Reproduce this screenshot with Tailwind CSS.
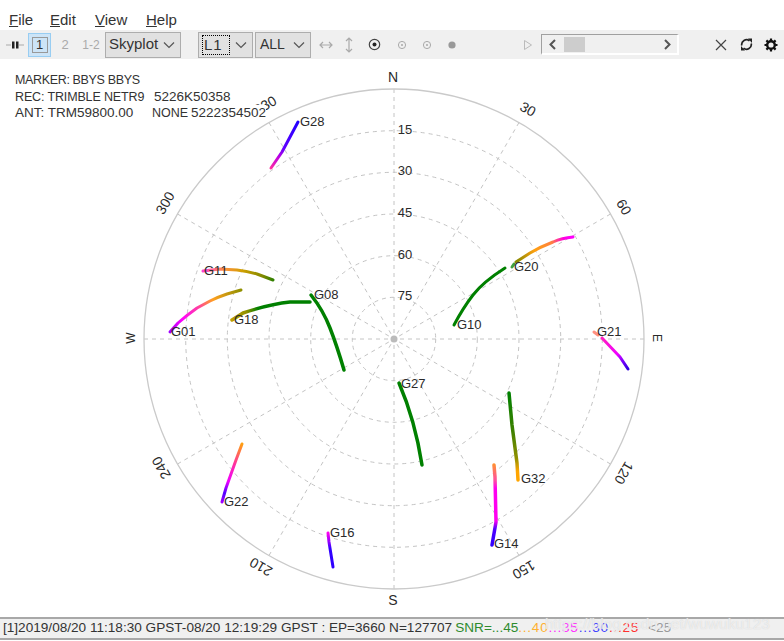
<!DOCTYPE html>
<html lang="en">
  <head>
    <meta charset="UTF-8" />
    <title>RTKPLOT</title>
    <script src="https://cdn.jsdelivr.net/npm/@tailwindcss/browser@4"></script>
  </head>
  <body class="bg-white w-[784px] h-[641px] overflow-hidden flex flex-col font-['Liberation_Sans',sans-serif] text-[#222]">
    <!-- Menu -->
    <div class="h-[30px] flex items-center pl-[9px] pt-[10px] text-[15px] text-[#333]">
      <span class="w-[41px]"><u>F</u>ile</span>
      <span class="w-[45px]"><u>E</u>dit</span>
      <span class="w-[51px]"><u>V</u>iew</span>
      <span><u>H</u>elp</span>
    </div>

    <!-- Toolbar -->
    <div class="h-[29px] bg-[#f0f0f0] flex items-center text-[14px]">
      <svg class="ml-[6px] w-[18px] h-[12px]" viewBox="0 0 18 12">
        <path d="M0 6h5M13 6h5" stroke="#aaa" stroke-width="1" />
        <path d="M6 2.500h2.500v7H6zM10 2.500h2.500v7H10z" fill="#222" />
      </svg>
      <div class="ml-[4px] w-[23px] h-[24px] bg-[#cce4f7] border border-[#98cdf2] flex items-center justify-center">
        <div class="w-[16px] h-[16px] border border-[#999] flex items-center justify-center text-[13px] text-[#333]">1</div>
      </div>
      <span class="ml-[8px] w-[12px] text-center text-[13px] text-[#aaa]">2</span>
      <span class="ml-[10px] w-[20px] text-center text-[12px] text-[#aaa] whitespace-nowrap">1-2</span>
      <div class="ml-[4px] w-[76px] h-[26px] bg-[#e1e1e1] border border-[#adadad] flex items-center justify-between pl-[3px] pr-[5px] text-[15px] text-[#333]">
        Skyplot
        <svg class="w-[12px] h-[8px]" viewBox="0 0 12 8"><path d="M1 1.500l5 5 5-5" fill="none" stroke="#555" stroke-width="1.200" /></svg>
      </div>
      <div class="ml-[17px] w-[55px] h-[26px] bg-[#e1e1e1] border border-[#adadad] flex items-center justify-between pl-[3px] pr-[5px] text-[#333]">
        <span class="w-[28px] h-[20px] border border-dotted border-black flex items-center text-[15px] leading-none pl-[1px] tracking-[1px]">L1</span>
        <svg class="w-[12px] h-[8px]" viewBox="0 0 12 8"><path d="M1 1.500l5 5 5-5" fill="none" stroke="#555" stroke-width="1.200" /></svg>
      </div>
      <div class="ml-[2px] w-[56px] h-[26px] bg-[#e1e1e1] border border-[#adadad] flex items-center justify-between pl-[4px] pr-[5px] text-[14px] text-[#333]">
        ALL
        <svg class="w-[12px] h-[8px]" viewBox="0 0 12 8"><path d="M1 1.500l5 5 5-5" fill="none" stroke="#555" stroke-width="1.200" /></svg>
      </div>
      <svg class="ml-[8px] w-[14px] h-[10px]" viewBox="0 0 14 10">
        <path d="M1 5h12M4 2L1 5l3 3M10 2l3 3-3 3" fill="none" stroke="#aaa" stroke-width="1.200" />
      </svg>
      <svg class="ml-[11px] w-[10px] h-[16px]" viewBox="0 0 10 16">
        <path d="M5 1v14M2 4l3-3 3 3M2 12l3 3 3-3" fill="none" stroke="#aaa" stroke-width="1.200" />
      </svg>
      <svg class="ml-[14px] w-[13px] h-[13px]" viewBox="0 0 13 13">
        <circle cx="6.500" cy="6.500" r="5.200" fill="none" stroke="#444" stroke-width="1.200" />
        <circle cx="6.500" cy="6.500" r="2" fill="#222" />
      </svg>
      <svg class="ml-[16px] w-[10px] h-[10px]" viewBox="0 0 10 10">
        <circle cx="5" cy="5" r="3.600" fill="none" stroke="#aaa" />
        <circle cx="5" cy="5" r="1" fill="#aaa" />
      </svg>
      <svg class="ml-[15px] w-[10px] h-[10px]" viewBox="0 0 10 10">
        <circle cx="5" cy="5" r="3.600" fill="none" stroke="#aaa" />
        <circle cx="5" cy="5" r="1" fill="#aaa" />
      </svg>
      <svg class="ml-[15px] w-[10px] h-[10px]" viewBox="0 0 10 10">
        <circle cx="5" cy="5" r="3.600" fill="#999" />
      </svg>
      <svg class="ml-[66px] w-[10px] h-[12px]" viewBox="0 0 10 12">
        <path d="M1.500 1.500l7 4.500-7 4.500z" fill="none" stroke="#bbb" />
      </svg>
      <!-- Time slider -->
      <div class="ml-[8px] w-[138px] h-[21px] bg-[#f0f0f0] border-t border-l border-[#a0a0a0] border-r-2 border-b-2 border-r-white border-b-white flex items-center">
        <svg class="ml-[6px] w-[9px] h-[11px]" viewBox="0 0 9 11"><path d="M7 1L2.500 5.500 7 10" fill="none" stroke="#555" stroke-width="2" /></svg>
        <div class="ml-[7px] w-[21px] h-[15px] bg-[#cdcdcd]"></div>
        <svg class="ml-[78px] w-[9px] h-[11px]" viewBox="0 0 9 11"><path d="M2 1l4.500 4.500L2 10" fill="none" stroke="#555" stroke-width="2" /></svg>
      </div>
      <svg class="ml-[36px] w-[12px] h-[12px]" viewBox="0 0 12 12">
        <path d="M1 1l10 10M11 1L1 11" stroke="#444" stroke-width="1.200" />
      </svg>
      <svg class="ml-[13px] w-[13px] h-[13px]" viewBox="0 0 13 13">
        <path d="M1.800 7.500A4.800 4.800 0 0 1 9.500 2.800M11.200 5.500A4.800 4.800 0 0 1 3.500 10.200" fill="none" stroke="#222" stroke-width="1.700" />
        <path d="M8 0.500h4v4.500zM5 12.500H1V8z" fill="#222" />
      </svg>
      <svg class="ml-[11px] w-[14px] h-[14px]" viewBox="0 0 14 14">
        <circle cx="7" cy="7" r="3.800" fill="none" stroke="#111" stroke-width="2.400" />
        <path d="M7 0.500v2.500M7 11v2.500M0.500 7h2.500M11 7h2.500M2.400 2.400l1.800 1.800M9.800 9.800l1.800 1.800M11.600 2.400L9.800 4.200M4.200 9.800l-1.800 1.800" stroke="#111" stroke-width="2.200" />
      </svg>
    </div>

    <!-- Plot -->
    <div class="relative h-[558px]">
      <svg class="block" width="784" height="558" viewBox="0 59 784 558" font-family="Liberation Sans, sans-serif" font-size="13" fill="#2a2a2a">
        <defs>
          <linearGradient id="g01" gradientUnits="userSpaceOnUse" x1="170" y1="332" x2="241" y2="290">
            <stop offset="0" stop-color="#a000ff" />
            <stop offset="0.2" stop-color="#ff00ff" />
            <stop offset="0.45" stop-color="#ff40a0" />
            <stop offset="0.65" stop-color="#ffa020" />
            <stop offset="1" stop-color="#909000" />
          </linearGradient>
          <linearGradient id="g11" gradientUnits="userSpaceOnUse" x1="203" y1="271" x2="273" y2="280">
            <stop offset="0" stop-color="#ff40d0" />
            <stop offset="0.3" stop-color="#ff9040" />
            <stop offset="0.55" stop-color="#d0a000" />
            <stop offset="0.85" stop-color="#808800" />
            <stop offset="1" stop-color="#308000" />
          </linearGradient>
          <linearGradient id="g18" gradientUnits="userSpaceOnUse" x1="232" y1="320" x2="310" y2="302">
            <stop offset="0" stop-color="#c0a000" />
            <stop offset="0.2" stop-color="#909000" />
            <stop offset="0.35" stop-color="#008000" />
            <stop offset="1" stop-color="#008000" />
          </linearGradient>
          <linearGradient id="g20" gradientUnits="userSpaceOnUse" x1="516" y1="262" x2="573" y2="237">
            <stop offset="0" stop-color="#808800" />
            <stop offset="0.35" stop-color="#ffa010" />
            <stop offset="0.65" stop-color="#ff8040" />
            <stop offset="0.85" stop-color="#ff00e0" />
            <stop offset="1" stop-color="#ff00ff" />
          </linearGradient>
          <linearGradient id="g21" gradientUnits="userSpaceOnUse" x1="602" y1="338" x2="628" y2="369">
            <stop offset="0" stop-color="#ff20c0" />
            <stop offset="0.55" stop-color="#f000ff" />
            <stop offset="0.75" stop-color="#8000ff" />
            <stop offset="1" stop-color="#3000e0" />
          </linearGradient>
          <linearGradient id="g32" gradientUnits="userSpaceOnUse" x1="509" y1="393" x2="518" y2="480">
            <stop offset="0" stop-color="#008000" />
            <stop offset="0.45" stop-color="#408000" />
            <stop offset="0.75" stop-color="#909000" />
            <stop offset="0.9" stop-color="#ffa500" />
          </linearGradient>
          <linearGradient id="g14" gradientUnits="userSpaceOnUse" x1="494" y1="464" x2="492" y2="545">
            <stop offset="0" stop-color="#ff9030" />
            <stop offset="0.2" stop-color="#ff50a0" />
            <stop offset="0.3" stop-color="#ff00f0" />
            <stop offset="0.7" stop-color="#ff00f0" />
            <stop offset="0.8" stop-color="#5000ff" />
            <stop offset="1" stop-color="#3000ff" />
          </linearGradient>
          <linearGradient id="g22" gradientUnits="userSpaceOnUse" x1="242" y1="444" x2="222" y2="502">
            <stop offset="0" stop-color="#ffa010" />
            <stop offset="0.35" stop-color="#ff30a0" />
            <stop offset="0.65" stop-color="#f000ff" />
            <stop offset="0.85" stop-color="#5000ff" />
            <stop offset="1" stop-color="#a000ff" />
          </linearGradient>
          <linearGradient id="g16" gradientUnits="userSpaceOnUse" x1="328" y1="533" x2="333" y2="567">
            <stop offset="0" stop-color="#ff00f0" />
            <stop offset="0.3" stop-color="#8000ff" />
            <stop offset="0.45" stop-color="#3000ff" />
            <stop offset="1" stop-color="#3000ff" />
          </linearGradient>
          <linearGradient id="g28" gradientUnits="userSpaceOnUse" x1="298" y1="122" x2="270" y2="168">
            <stop offset="0" stop-color="#2000ff" />
            <stop offset="0.55" stop-color="#6000ff" />
            <stop offset="0.75" stop-color="#c000e0" />
            <stop offset="1" stop-color="#ff30a0" />
          </linearGradient>
        </defs>

        <!-- Elevation rings -->
        <g fill="none" stroke="#c4c4c4" stroke-dasharray="4 4">
          <circle cx="394" cy="339" r="208.300" />
          <circle cx="394" cy="339" r="166.700" />
          <circle cx="394" cy="339" r="125" />
          <circle cx="394" cy="339" r="83.300" />
          <circle cx="394" cy="339" r="41.700" />
          <path d="M394 89V589M144 339H644M519 122.500L269 555.500M610.500 214L177.500 464M610.500 464L177.500 214M519 555.500L269 122.500" />
        </g>
        <circle cx="394" cy="339" r="250" fill="none" stroke="#cacaca" stroke-width="1.300" />
        <circle cx="394" cy="339" r="3.500" fill="#bbb" />

        <!-- Azimuth labels -->
        <g text-anchor="middle" font-size="14">
          <text x="393" y="82">N</text>
          <text x="393" y="605">S</text>
          <text transform="translate(657 338) rotate(90)" y="4" font-size="12">E</text>
          <text transform="translate(131 338) rotate(270)" y="4" font-size="12">W</text>
          <text transform="translate(528 109) rotate(30)" y="5">30</text>
          <text transform="translate(624 207) rotate(60)" y="5">60</text>
          <text transform="translate(624 473) rotate(120)" y="5">120</text>
          <text transform="translate(524 570) rotate(150)" y="5">150</text>
          <text transform="translate(261 567) rotate(210)" y="5">210</text>
          <text transform="translate(161 468) rotate(240)" y="5">240</text>
          <text transform="translate(165 203) rotate(300)" y="5">300</text>
          <text transform="translate(265 105) rotate(330)" y="5">330</text>
        </g>
        <!-- Elevation labels -->
        <g text-anchor="middle">
          <text x="405" y="134">15</text>
          <text x="405" y="175">30</text>
          <text x="405" y="217">45</text>
          <text x="405" y="259">60</text>
          <text x="405" y="300">75</text>
        </g>

        <!-- Satellite tracks -->
        <g fill="none" stroke-width="3" stroke-linecap="round" stroke-linejoin="round">
          <path d="M170 332L178 323Q187 315 197 308L210 301Q218 297 227 294L241 290" stroke="url(#g01)" />
          <path d="M203 271L220 269L237 270Q247 271 257 274L273 280" stroke="url(#g11)" />
          <path d="M232 320L243 313Q270 304 290 302L310 302" stroke="url(#g18)" stroke-width="3.500" />
          <path d="M311 295Q323 310 330 328T344 370" stroke="#008000" stroke-width="3.500" />
          <path d="M454 325Q463 308 473 295T505 268" stroke="#008000" />
          <path d="M512 267L514 264" stroke="#40a040" />
          <path d="M516 262L530 253Q540 247 553 242Q562 238 573 237" stroke="url(#g20)" />
          <path d="M594 332L598 335" stroke="#ff9080" />
          <path d="M602 338L620 357L628 369" stroke="url(#g21)" />
          <path d="M509 393L512 425L517 463L518 480" stroke="url(#g32)" stroke-width="3.500" />
          <path d="M494 465L495 477L496 522L492 545" stroke="url(#g14)" stroke-width="3.500" />
          <path d="M242 444L236 460L226 488L222 502" stroke="url(#g22)" />
          <path d="M328 533L329 542L333 567" stroke="url(#g16)" />
          <path d="M298 122L282 152L271 168" stroke="url(#g28)" />
          <path d="M399 383Q415 420 422 465" stroke="#008000" stroke-width="3.500" />
        </g>

        <!-- Satellite labels -->
        <g font-size="13">
          <text x="171" y="336">G01</text>
          <text x="204" y="275">G11</text>
          <text x="234" y="324">G18</text>
          <text x="314" y="299">G08</text>
          <text x="457" y="329">G10</text>
          <text x="514" y="271">G20</text>
          <text x="597" y="336">G21</text>
          <text x="401" y="388">G27</text>
          <text x="521" y="483">G32</text>
          <text x="494" y="548">G14</text>
          <text x="224" y="506">G22</text>
          <text x="330" y="537">G16</text>
          <text x="300" y="126">G28</text>
        </g>
      </svg>
      <!-- Header text sits over the 330 label and hides part of it -->
      <div class="absolute left-[15px] top-[14px] text-[12.500px] leading-[15.500px] text-[#333] whitespace-nowrap">
        <div class="tracking-[-0.350px]">MARKER: BBYS BBYS</div>
        <div><span class="inline-block w-[139px] tracking-[-0.140px]">REC: TRIMBLE NETR9</span><span class="text-[13.500px]">5226K50358</span></div>
        <div class="bg-white"><span class="inline-block w-[137px] text-[13.500px]">ANT: TRM59800.00</span><span class="inline-block w-[39px]">NONE</span><span class="text-[13.500px]">5222354502</span></div>
      </div>
    </div>

    <!-- Status bar -->
    <div class="relative h-[23px] bg-[#f0f0f0] border-t-2 border-b-2 border-[#a8a8a8] flex items-center pl-[3px] text-[13.600px] whitespace-pre text-[#333]">
      <span>[1]2019/08/20 11:18:30 GPST-08/20 12:19:29 GPST : EP=3660 N=127707</span>
      <span class="ml-[3px] text-[#2e8b2e]">SNR=...45</span><span class="text-[#ffb030] tracking-[0.750px]">...40</span><span class="text-[#ff30ff] tracking-[0.750px]">...35</span><span class="text-[#4040ff] tracking-[0.750px]">...30</span><span class="text-[#ff3030] tracking-[0.750px]">...25</span>
      <span class="ml-[9px] text-[#999]">&lt;25</span>
      <span class="absolute left-[545px] -top-[7px] text-[15.500px] text-white/60 [text-shadow:0_0_1px_#ccc]">https://blog.csdn.net/wuwuku123</span>
    </div>
  </body>
</html>
